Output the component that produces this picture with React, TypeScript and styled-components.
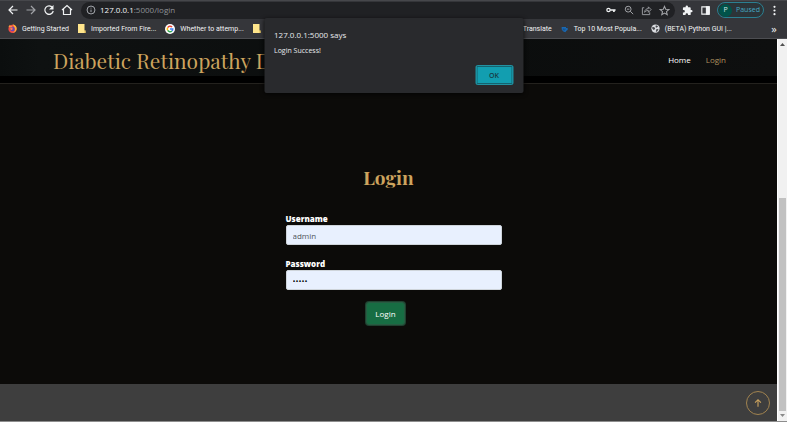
import React from "react";
import styled, { createGlobalStyle } from "styled-components";

const GlobalStyle = createGlobalStyle`
  *, *::before, *::after { box-sizing: border-box; }
  html, body { margin: 0; padding: 0; }
  body { background: #0c0b09; font-family: "Open Sans", "Noto Sans", sans-serif; }
  button, input { font-family: inherit; margin: 0; }
`;

const Browser = styled.div`
  position: relative;
  display: flex;
  flex-direction: column;
  min-height: 100vh;
`;

const Chrome = styled.header`
  background: #35363a;
  border-top: 1px solid #46474b;
  border-bottom: 1px solid #4d4e52;
`;

const Toolbar = styled.div`
  display: flex;
  align-items: center;
  height: 18px;
  padding: 0 7px 0 6px;
`;

const NavButtons = styled.div`
  display: flex;
  gap: 5px;
  margin-right: 8px;
`;

const IconButton = styled.button<{ $dim?: boolean; $size?: number }>`
  display: flex;
  align-items: center;
  justify-content: center;
  flex: none;
  width: ${(p) => p.$size ?? 13}px;
  height: 14px;
  padding: 0;
  border: 0;
  background: none;
  color: ${(p) => (p.$dim ? "#a0a2a6" : "#f1f3f4")};
`;

const AddressBar = styled.div`
  display: flex;
  flex: 1;
  align-items: center;
  height: 17px;
  padding: 0 4px 0 5px;
  border-radius: 9px;
  background: #202124;
  color: #bdc1c6;
`;

const AddressText = styled.div`
  flex: 1;
  padding-left: 4px;
  color: #8f9297;
  font-size: 8px;
  line-height: 16px;
  white-space: nowrap;
`;

const Host = styled.span`
  color: #f1f3f4;
`;

const AddressActions = styled.div`
  display: flex;
  gap: 5px;
`;

const ToolbarActions = styled.div`
  display: flex;
  align-items: center;
  gap: 5px;
  margin-left: 6px;
`;

const Profile = styled.button`
  display: flex;
  align-items: center;
  gap: 4px;
  width: 47px;
  height: 16px;
  padding: 0 0 0 1px;
  border: 1px solid #2b7f91;
  border-radius: 8px;
  background: #2c3438;
  color: #45a9c4;
  font-size: 7px;
  line-height: 12px;
`;

const Avatar = styled.span`
  width: 13px;
  height: 13px;
  border-radius: 50%;
  background: #00534a;
  color: #d9e8e5;
  text-align: center;
`;

const Bookmarks = styled.nav`
  display: flex;
  align-items: center;
  height: 19px;
  padding: 0 10px 0 8px;
  gap: 9px;
`;

const Bookmark = styled.a`
  display: flex;
  align-items: center;
  gap: 5px;
  color: #f1f3f4;
  font-family: Roboto, "Open Sans", sans-serif;
  font-size: 7px;
  line-height: 12px;
  text-decoration: none;
  white-space: nowrap;
  svg { flex: none; }
`;

const BookmarkGap = styled.div`
  width: 244px;
`;

const Overflow = styled(IconButton)`
  margin-left: auto;
  font-size: 11px;
  line-height: 12px;
`;

const Viewport = styled.div`
  display: flex;
  flex: 1;
  border-bottom: 1px solid #8d8d8d;
`;

const Page = styled.div`
  display: flex;
  flex: 1;
  flex-direction: column;
  min-width: 0;
`;

const SiteHeader = styled.div`
  display: flex;
  align-items: center;
  height: 37px;
  padding: 5px 51px 0 53px;
  background: linear-gradient(90deg, #0b0e0e, #0e1111 5%, #0b0d0d 60%, #0e0f0f);
`;

const SiteTitle = styled.h1`
  margin: 0;
  color: #cda45e;
  font: 400 21px/28px "Playfair Display", "Liberation Serif", serif;
  white-space: nowrap;
`;

const SiteNav = styled.nav`
  display: flex;
  gap: 15px;
  margin-left: auto;
`;

const SiteLink = styled.a<{ $active?: boolean }>`
  color: ${(p) => (p.$active ? "#ad915f" : "#ffffff")};
  font-size: 8px;
  line-height: 12px;
  text-decoration: none;
`;

const Divider = styled.div`
  height: 8px;
  background: #000;
  border-bottom: 1px solid #24221e;
`;

const Main = styled.main`
  display: flex;
  flex: 1;
  flex-direction: column;
  align-items: center;
  padding: 79px 0 40px;
  background: #0c0b09;
`;

const Heading = styled.h2`
  margin: 0 0 21px;
  color: #cda45e;
  font: 700 19px/28px "Playfair Display", "Liberation Serif", serif;
`;

const Form = styled.form`
  display: flex;
  flex-direction: column;
  width: 226px;
  padding-left: 10px;
`;

const Field = styled.div`
  display: flex;
  flex-direction: column;
  margin-bottom: 12px;
`;

const Label = styled.label`
  color: #fff;
  font-size: 8px;
  font-weight: 800;
  line-height: 13px;
`;

const TextInput = styled.input`
  width: 100%;
  height: 20px;
  padding: 0 6px;
  border: 1px solid #ced4da;
  border-radius: 2px;
  outline: 0;
  background: #e8f0fe;
  color: #50555b;
  font-size: 8px;
  &[type="password"] { color: #111; }
`;

const Submit = styled.button`
  align-self: center;
  height: 23px;
  margin-right: 16px;
  padding: 0 8px;
  border: 1px solid #285b42;
  border-radius: 3px;
  box-shadow: 0 0 0 1px #1e422f;
  background: #176d43;
  color: #fff;
  font-size: 8px;
`;

const Footer = styled.footer`
  display: flex;
  align-items: center;
  justify-content: flex-end;
  height: 37px;
  padding: 0 7px;
  background: #3e3e3e;
`;

const TopLink = styled.a`
  display: flex;
  align-items: center;
  justify-content: center;
  width: 24px;
  height: 24px;
  border: 1px solid #a1834f;
  border-radius: 50%;
  color: #cda45e;
`;

const Scrollbar = styled.div`
  display: flex;
  flex-direction: column;
  align-items: center;
  justify-content: space-between;
  width: 10px;
  padding: 4px 0;
  border-left: 1px solid #fff;
  background: #f1f1f1;
`;

const Thumb = styled.div`
  width: 7px;
  height: 213px;
  margin: auto 0 3px;
  background: #c1c1c1;
`;

const Dialog = styled.div`
  position: absolute;
  top: 18px;
  left: 50%;
  display: flex;
  flex-direction: column;
  width: 259px;
  padding: 10px 10px 8px;
  border-radius: 2px;
  box-shadow: 0 1px 4px #000b;
  background: #292a2d;
  transform: translateX(-50%);
`;

const DialogTitle = styled.h3`
  margin: 0 0 3px;
  color: #e8eaed;
  font-size: 8px;
  font-weight: 400;
  line-height: 13px;
`;

const DialogText = styled.p`
  margin: 0 0 8px;
  color: #e8eaed;
  font-size: 7px;
  line-height: 13px;
`;

const OkButton = styled.button`
  align-self: flex-end;
  width: 38px;
  height: 20px;
  padding: 0;
  border: 1px solid #2192a2;
  border-radius: 2px;
  box-shadow: inset 0 0 0 1px #14626e;
  background: #129eb0;
  color: #173c44;
  font-size: 7px;
  font-weight: 600;
`;

type GlyphProps = { size?: number; children: React.ReactNode; width?: number };
const Glyph = ({ size = 12, width = 2.4, children }: GlyphProps) => (
  <svg width={size} height={size} viewBox="0 0 24 24" fill="none" stroke="currentColor" strokeWidth={width} aria-hidden="true">
    {children}
  </svg>
);

const Firefox = () => (
  <svg width="9" height="9" viewBox="0 0 24 24" aria-hidden="true">
    <circle cx="12" cy="13" r="11" fill="#ef4b45" />
    <path d="M12 1c8 0 12 7 11 13-1 5-5 9-10 10 7-5 8-13-1-23z" fill="#ffb13b" />
    <path d="M1 8l4-6 3 4 4-2-2 5z" fill="#ff9640" />
    <circle cx="12" cy="13" r="6" fill="#6548b5" />
    <path d="M6 11c4-4 8-1 7 1-3 0-3 3 0 4-4 1-7-1-7-5z" fill="#ff8050" />
  </svg>
);

const Folder = () => (
  <svg width="8" height="9" viewBox="0 0 16 18" aria-hidden="true">
    <path d="M0 0h13v13h2v5H0z" fill="#ffe58b" />
    <path d="M13 13v5h2v-5z" fill="#e0b94e" />
  </svg>
);

const Google = () => (
  <svg width="10" height="10" viewBox="0 0 24 24" aria-hidden="true">
    <circle cx="12" cy="12" r="12" fill="#fff" />
    <g fill="none" strokeWidth="3.6">
      <path d="M6.5 8.5a6.6 6.6 0 0 1 10.4-1.2" stroke="#ea4335" />
      <path d="M6.5 15.5a6.6 6.6 0 0 1 0-7" stroke="#fbbc05" />
      <path d="M16.5 16.9a6.6 6.6 0 0 1-10-1.4" stroke="#34a853" />
      <path d="M12 12h6.6a6.6 6.6 0 0 1-2.1 4.9" stroke="#4285f4" />
    </g>
  </svg>
);

const Shield = () => (
  <svg width="8" height="8" viewBox="0 0 24 24" aria-hidden="true">
    <path d="M2 6h13v3h5v6l-4 2-3 5-7-3-4-6z" fill="#1969b4" />
    <path d="M7 10v5h5v-5M19 3v4" fill="none" stroke="#14457a" strokeWidth="2" />
  </svg>
);

const Globe = () => (
  <svg width="9" height="9" viewBox="0 0 24 24" aria-hidden="true">
    <circle cx="12" cy="12" r="11" fill="#dadce0" />
    <path d="M4 7l6 2 1 4-4 3-4-5zM13 3l6 3-4 4-3-2zM14 14l6-1-3 6-4 2z" fill="#45474b" />
  </svg>
);

export default function App() {
  return (
    <>
      <GlobalStyle />
      <Browser>
        <Chrome>
          <Toolbar>
            <NavButtons>
              <IconButton aria-label="Back"><Glyph><path d="M21 12H4M12 4l-8 8 8 8" /></Glyph></IconButton>
              <IconButton $dim aria-label="Forward"><Glyph><path d="M3 12h17M12 4l8 8-8 8" /></Glyph></IconButton>
              <IconButton aria-label="Reload">
                <Glyph><path d="M19 7a8.5 8.5 0 1 0 1.5 7" /><path d="M21 2v9h-9z" fill="currentColor" stroke="none" /></Glyph>
              </IconButton>
              <IconButton aria-label="Home page"><Glyph><path d="M2 12L12 3l10 9M5 10v11h14V10" /></Glyph></IconButton>
            </NavButtons>
            <AddressBar>
              <Glyph size={10} width={2}><circle cx="12" cy="12" r="9.5" /><path d="M12 11v6M12 6.5v2" /></Glyph>
              <AddressText><Host>127.0.0.1</Host>:5000/login</AddressText>
              <AddressActions>
                <IconButton aria-label="Passwords">
                  <Glyph size={10}><circle cx="6" cy="12" r="4" strokeWidth="3" /><path d="M10 12h13M19 12v5" strokeWidth="4" /></Glyph>
                </IconButton>
                <IconButton $dim aria-label="Zoom">
                  <Glyph size={10}><circle cx="10" cy="10" r="7" /><path d="M15 15l7 7M7 10h6" /></Glyph>
                </IconButton>
                <IconButton $dim aria-label="Share">
                  <Glyph size={11} width={2}><path d="M7 6H3v15h16v-5M8 16c0-6 4-8 8-8V4l6 6-6 6v-4c-4 0-6 1-8 4z" /></Glyph>
                </IconButton>
                <IconButton $dim aria-label="Bookmark this page">
                  <Glyph size={11} width={2.4}><path d="M12 3l2.7 6.3 6.8.6-5.2 4.5 1.6 6.6-5.9-3.5L6.1 21l1.6-6.6-5.2-4.5 6.8-.6z" /></Glyph>
                </IconButton>
              </AddressActions>
            </AddressBar>
            <ToolbarActions>
              <IconButton aria-label="Extensions">
                <Glyph size={11}><path stroke="none" fill="currentColor" d="M20.5 11H19V7a2 2 0 0 0-2-2h-4V3.500a2.500 2.500 0 0 0-5 0V5H4a2 2 0 0 0-2 2v3.800h1.500a2.700 2.700 0 0 1 0 5.400H2V20a2 2 0 0 0 2 2h3.800v-1.500a2.700 2.700 0 0 1 5.400 0V22H17a2 2 0 0 0 2-2v-4h1.500a2.500 2.500 0 0 0 0-5z" /></Glyph>
              </IconButton>
              <IconButton aria-label="Side panel">
                <Glyph size={11}><path d="M4 4h16v16H4z" /><path d="M14 4h6v16h-6z" fill="currentColor" /></Glyph>
              </IconButton>
              <Profile><Avatar>P</Avatar>Paused</Profile>
              <IconButton $size={11} aria-label="Menu">
                <Glyph size={11}><g fill="currentColor" stroke="none"><circle cx="12" cy="4" r="2.4" /><circle cx="12" cy="12" r="2.4" /><circle cx="12" cy="20" r="2.4" /></g></Glyph>
              </IconButton>
            </ToolbarActions>
          </Toolbar>
          <Bookmarks aria-label="Bookmarks">
            <Bookmark href="#"><Firefox />Getting Started</Bookmark>
            <Bookmark href="#"><Folder />Imported From Fire...</Bookmark>
            <Bookmark href="#"><Google />Whether to attemp...</Bookmark>
            <Bookmark href="#" aria-label="Folder"><Folder /></Bookmark>
            <BookmarkGap />
            <Bookmark href="#">Translate</Bookmark>
            <Bookmark href="#"><Shield />Top 10 Most Popula...</Bookmark>
            <Bookmark href="#"><Globe />(BETA) Python GUI |...</Bookmark>
            <Overflow $size={6} aria-label="More bookmarks">»</Overflow>
          </Bookmarks>
        </Chrome>

        <Viewport>
          <Page>
            <SiteHeader>
              <SiteTitle>Diabetic Retinopathy D</SiteTitle>
              <SiteNav>
                <SiteLink href="#">Home</SiteLink>
                <SiteLink href="#" $active>Login</SiteLink>
              </SiteNav>
            </SiteHeader>
            <Divider />
            <Main>
              <Heading>Login</Heading>
              <Form onSubmit={(e) => e.preventDefault()}>
                <Field>
                  <Label htmlFor="username">Username</Label>
                  <TextInput id="username" defaultValue="admin" />
                </Field>
                <Field>
                  <Label htmlFor="password">Password</Label>
                  <TextInput id="password" type="password" defaultValue="admin" />
                </Field>
                <Submit type="submit">Login</Submit>
              </Form>
            </Main>
            <Footer>
              <TopLink href="#" aria-label="Back to top">
                <Glyph size={10} width={2.6}><path d="M12 21V4M5 11l7-7 7 7" /></Glyph>
              </TopLink>
            </Footer>
          </Page>
          <Scrollbar aria-hidden="true">
            <svg width="5" height="3" viewBox="0 0 10 6"><path d="M0 6l5-6 5 6z" fill="#505050" /></svg>
            <Thumb />
            <svg width="5" height="3" viewBox="0 0 10 6"><path d="M0 0h10L5 6z" fill="#8a8a8a" /></svg>
          </Scrollbar>
        </Viewport>

        <Dialog role="alertdialog" aria-labelledby="alert-title" aria-describedby="alert-text">
          <DialogTitle id="alert-title">127.0.0.1:5000 says</DialogTitle>
          <DialogText id="alert-text">Login Success!</DialogText>
          <OkButton>OK</OkButton>
        </Dialog>
      </Browser>
    </>
  );
}
